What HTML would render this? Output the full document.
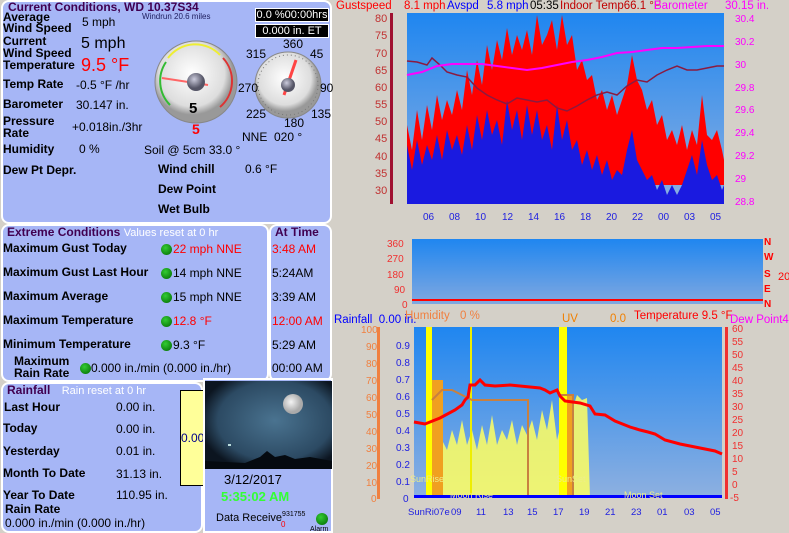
<!DOCTYPE html>
<html><head><meta charset="utf-8"><style>
*{margin:0;padding:0;box-sizing:border-box}
body{width:789px;height:531px;overflow:hidden;background:#d4d0c8;font-family:"Liberation Sans",sans-serif;position:relative}
.p{position:absolute;background:#a6b6f6;border:2px solid #fff;border-radius:8px}
.t{position:absolute;white-space:nowrap;font-size:12px;color:#000}
.b{font-weight:bold}
.s{font-size:10px}
.dot{position:absolute;width:11px;height:11px;border-radius:50%;background:radial-gradient(circle at 40% 35%,#3c3,#060);}
</style></head><body>

<!-- Current conditions -->
<div class="p" style="left:1px;top:0;width:331px;height:224px"></div>
<div class="t b" style="left:8px;top:0;color:#400050;font-size:12px">Current Conditions, WD 10.37S34</div>
<div class="t b" style="left:3px;top:12px;line-height:11px;font-size:12px">Average<br>Wind Speed</div>
<div class="t" style="left:82px;top:15px">5 mph</div>
<div class="t" style="left:142px;top:12px;font-size:8px;color:#202060">Windrun 20.6 miles</div>
<div class="t b" style="left:3px;top:35px;line-height:12px">Current<br>Wind Speed</div>
<div class="t" style="left:81px;top:35px;font-size:16px">5 mph</div>
<div class="t b" style="left:3px;top:58px">Temperature</div>
<div class="t" style="left:81px;top:55px;font-size:18px;color:#f00">9.5 °F</div>
<div class="t b" style="left:3px;top:77px">Temp Rate</div>
<div class="t" style="left:76px;top:78px">-0.5 °F /hr</div>
<div class="t b" style="left:3px;top:97px">Barometer</div>
<div class="t" style="left:76px;top:98px">30.147 in.</div>
<div class="t b" style="left:3px;top:115px;line-height:12px">Pressure<br>Rate</div>
<div class="t" style="left:72px;top:120px">+0.018in./3hr</div>
<div class="t b" style="left:3px;top:142px">Humidity</div>
<div class="t" style="left:79px;top:142px">0 %</div>
<div class="t b" style="left:3px;top:163px">Dew Pt Depr.</div>
<div class="t" style="left:144px;top:143px">Soil @ 5cm 33.0 °</div>
<div class="t b" style="left:158px;top:162px">Wind chill</div>
<div class="t" style="left:245px;top:162px">0.6 °F</div>
<div class="t b" style="left:158px;top:182px">Dew Point</div>
<div class="t b" style="left:158px;top:202px">Wet Bulb</div>
<div style="position:absolute;left:255px;top:8px;width:74px;height:14px;background:#000;border:1px solid #fff;color:#fff;font-size:11px;text-align:center;line-height:12px">0.0 %00:00hrs</div>
<div style="position:absolute;left:255px;top:24px;width:74px;height:14px;background:#000;border:1px solid #fff;color:#fff;font-size:11px;text-align:center;line-height:12px">0.000 in. ET</div>
<svg style="position:absolute;left:0;top:0" width="335" height="225">
 <defs><radialGradient id="g1" cx="45%" cy="40%"><stop offset="0" stop-color="#fff"/><stop offset=".8" stop-color="#ddd"/><stop offset="1" stop-color="#999"/></radialGradient>
 <radialGradient id="k" cx="40%" cy="35%"><stop offset="0" stop-color="#ccd"/><stop offset="1" stop-color="#556"/></radialGradient></defs>
 <circle cx="196" cy="82" r="41" fill="url(#g1)" stroke="#888"/>
 <path d="M170 105 A34 34 0 0 1 166 62" stroke="#3b3" stroke-width="2" fill="none"/>
 <path d="M168 58 A34 34 0 0 1 220 55" stroke="#ee3" stroke-width="2" fill="none"/>
 <path d="M223 58 A34 34 0 0 1 220 107" stroke="#d33" stroke-width="2" fill="none"/>
 <line x1="162" y1="78" x2="208" y2="85" stroke="#f66" stroke-width="2"/>
 <circle cx="196" cy="82" r="9" fill="url(#k)"/>
 <text x="189" y="113" font-size="15" font-weight="bold" font-family="Liberation Sans">5</text>
 <text x="192" y="134" font-size="14" fill="#f00" font-weight="bold" font-family="Liberation Sans">5</text>
 <circle cx="288" cy="85" r="33" fill="url(#g1)" stroke="#888"/>
 <circle cx="288" cy="85" r="30" fill="none" stroke="#777" stroke-dasharray="1 3"/>
 <line x1="284" y1="95" x2="296" y2="60" stroke="#f44" stroke-width="3"/>
 <circle cx="288" cy="85" r="7" fill="url(#k)"/>
 <g font-size="12" font-family="Liberation Sans"><text x="283" y="48">360</text><text x="246" y="58">315</text><text x="310" y="58">45</text><text x="238" y="92">270</text><text x="320" y="92">90</text><text x="246" y="118">225</text><text x="311" y="118">135</text><text x="284" y="127">180</text><text x="242" y="141">NNE &#160;020 °</text></g>
</svg>

<!-- Extreme -->
<div class="p" style="left:1px;top:224px;width:268px;height:158px"></div>
<div class="p" style="left:269px;top:224px;width:63px;height:158px"></div>
<div class="t b" style="left:7px;top:225px;color:#400050">Extreme Conditions <span style="color:#fff;font-weight:normal;font-size:11px">Values reset at 0 hr</span></div>
<div class="t b" style="left:275px;top:225px;color:#400050">At Time</div>
<div class="t b" style="left:3px;top:241px">Maximum Gust Today</div>
<div class="t b" style="left:3px;top:265px">Maximum Gust Last Hour</div>
<div class="t b" style="left:3px;top:289px">Maximum Average</div>
<div class="t b" style="left:3px;top:313px">Maximum Temperature</div>
<div class="t b" style="left:3px;top:337px">Minimum Temperature</div>
<div class="t b" style="left:14px;top:355px;line-height:12px;text-align:center">Maximum<br>Rain Rate</div>
<div class="dot" style="left:161px;top:244px"></div><div class="t" style="left:173px;top:242px;color:#f00">22 mph NNE</div>
<div class="dot" style="left:161px;top:268px"></div><div class="t" style="left:173px;top:266px">14 mph NNE</div>
<div class="dot" style="left:161px;top:292px"></div><div class="t" style="left:173px;top:290px">15 mph NNE</div>
<div class="dot" style="left:161px;top:316px"></div><div class="t" style="left:173px;top:314px;color:#f00">12.8 °F</div>
<div class="dot" style="left:161px;top:340px"></div><div class="t" style="left:173px;top:338px">9.3 °F</div>
<div class="dot" style="left:80px;top:363px"></div><div class="t" style="left:91px;top:361px">0.000 in./min (0.000 in./hr)</div>
<div class="t" style="left:272px;top:242px;color:#f00">3:48 AM</div>
<div class="t" style="left:272px;top:266px">5:24AM</div>
<div class="t" style="left:272px;top:290px">3:39 AM</div>
<div class="t" style="left:272px;top:314px;color:#f00">12:00 AM</div>
<div class="t" style="left:272px;top:338px">5:29 AM</div>
<div class="t" style="left:272px;top:361px">00:00 AM</div>

<!-- Rainfall -->
<div class="p" style="left:1px;top:382px;width:202px;height:151px"></div>
<div class="t b" style="left:7px;top:383px;color:#400050">Rainfall <span style="color:#fff;font-weight:normal;font-size:11px;margin-left:8px">Rain reset at 0 hr</span></div>
<div class="t b" style="left:4px;top:400px">Last Hour</div><div class="t" style="left:116px;top:400px">0.00 in.</div>
<div class="t b" style="left:3px;top:421px">Today</div><div class="t" style="left:116px;top:422px">0.00 in.</div>
<div class="t b" style="left:3px;top:444px">Yesterday</div><div class="t" style="left:116px;top:444px">0.01 in.</div>
<div class="t b" style="left:3px;top:466px">Month To Date</div><div class="t" style="left:116px;top:467px">31.13 in.</div>
<div class="t b" style="left:3px;top:488px">Year To Date</div><div class="t" style="left:116px;top:488px">110.95 in.</div>
<div class="t b" style="left:5px;top:502px">Rain Rate</div>
<div class="t" style="left:5px;top:516px">0.000 in./min (0.000 in./hr)</div>
<div style="position:absolute;left:180px;top:390px;width:24px;height:96px;background:#ffff99;border:1px solid #000"></div>
<div class="t" style="left:181px;top:431px;color:#00008b">0.00</div>
<div class="p" style="left:203px;top:378px;width:130px;height:155px;border-radius:0"></div>
<svg style="position:absolute;left:205px;top:381px" width="127" height="88">
 <defs><radialGradient id="sky" cx="55%" cy="45%" r="60%"><stop offset="0" stop-color="#4a7390"/><stop offset=".75" stop-color="#2c4a63"/><stop offset="1" stop-color="#0c1520"/></radialGradient>
 <radialGradient id="mn" cx="40%" cy="40%"><stop offset="0" stop-color="#f4f4f4"/><stop offset="1" stop-color="#aaa"/></radialGradient></defs>
 <rect width="127" height="88" fill="url(#sky)"/>
 <circle cx="88" cy="23" r="10" fill="url(#mn)"/>
 <path d="M0 88 L0 80 L40 82 L55 76 L62 70 L70 76 L80 74 L90 78 L105 76 L127 80 L127 88Z" fill="#050a10"/>
 <rect x="23" y="63" width="3" height="2" fill="#bdd"/>
</svg>
<div class="t" style="left:224px;top:472px;font-size:13px">3/12/2017</div>
<div class="t b" style="left:221px;top:489px;font-size:13px;color:#3f3">5:35:02 AM</div>
<div class="t" style="left:216px;top:511px;font-size:11px">Data Receive<span style="font-size:7px;vertical-align:5px">931755</span></div>
<div class="t" style="left:281px;top:520px;font-size:8px;color:#f00">0</div>
<div class="dot" style="left:316px;top:513px;width:12px;height:12px"></div>
<div class="t" style="left:310px;top:526px;font-size:7px">Alarm</div>

<!-- Right charts -->
<svg style="position:absolute;left:332px;top:0" width="457" height="531" font-family="Liberation Sans">
 <defs>
  <linearGradient id="bg" x1="0" y1="0" x2="0" y2="1"><stop offset="0" stop-color="#1f86f0"/><stop offset="1" stop-color="#8eb0e0"/></linearGradient>
  <linearGradient id="bg2" x1="0" y1="0" x2="0" y2="1"><stop offset="0" stop-color="#1f86f0"/><stop offset="1" stop-color="#80a8e0"/></linearGradient>
 </defs>
 <g font-size="11.5">
  <text x="4" y="9" fill="#f00">Gustspeed</text><text x="72" y="9" fill="#f00">8.1 mph</text>
  <text x="115" y="9" fill="#00f">Avspd</text><text x="155" y="9" fill="#00f">5.8 mph</text>
  <text x="198" y="9">05:35</text><text x="228" y="9" fill="#c00000">Indoor Temp66.1 °F</text>
  <text x="322" y="9" fill="#f0f">Barometer</text><text x="393" y="9" fill="#f0f">30.15 in.</text>
 </g>
 <!-- top chart: plot x75..392 y13..204 -->
 <rect x="75" y="13" width="317" height="191" fill="url(#bg)"/>
 <polygon fill="#f00" points="75,125 80,150 85,110 90,140 95,105 100,130 105,95 110,120 115,100 120,115 125,90 130,110 135,70 140,95 145,60 150,85 155,45 160,70 165,40 170,60 175,28 180,55 185,35 190,50 195,30 200,55 205,15 210,45 215,35 220,20 225,50 230,15 235,45 240,35 245,70 250,60 255,80 260,75 265,100 270,90 275,110 280,95 285,115 290,100 295,85 300,55 305,80 310,90 315,110 320,100 325,125 330,115 335,140 340,130 345,145 350,125 355,150 360,130 365,145 370,95 375,135 380,140 385,130 390,150 392,160 392,185 75,185"/>
 <polygon fill="#1a1ae0" points="75,145 80,170 85,140 90,165 95,145 100,160 105,135 110,160 115,130 120,150 125,135 130,155 135,125 140,150 145,115 150,140 155,110 160,135 165,120 170,145 175,100 180,130 185,110 190,140 195,105 200,135 205,110 210,140 215,125 220,150 225,105 230,140 235,120 240,150 245,140 250,165 255,150 260,170 265,155 270,175 275,160 280,180 285,170 290,175 295,150 300,130 305,160 310,170 315,180 320,175 325,190 330,180 335,195 340,185 345,195 350,185 355,170 360,155 365,175 370,140 375,165 380,180 385,175 390,190 392,185 392,204 75,204"/>
 <polyline fill="none" stroke="#8b1a40" stroke-width="1.5" points="75,61 85,62 95,65 100,58 108,65 115,72 125,75 135,77 145,88 155,95 165,100 175,104 185,98 195,100 205,102 215,100 225,108 235,111 245,106 255,100 265,95 275,92 285,95 295,86 305,80 315,82 325,75 335,70 345,66 355,70 365,70 375,68 385,66 392,66"/>
 <polyline fill="none" stroke="#f0f" stroke-width="2" points="75,75 90,72 105,66 120,64 135,64 150,64 165,66 180,68 195,70 210,68 225,65 240,62 255,60 270,57 285,53 300,52 315,50 330,48 345,48 360,47 375,46 392,46"/>
 <rect x="58" y="13" width="3" height="191" fill="#a01030"/>
 <g font-size="11" fill="#c03030">
  <text x="43" y="22">80</text><text x="43" y="39">75</text><text x="43" y="57">70</text><text x="43" y="74">65</text><text x="43" y="91">60</text><text x="43" y="108">55</text><text x="43" y="125">50</text><text x="43" y="142">45</text><text x="43" y="160">40</text><text x="43" y="177">35</text><text x="43" y="194">30</text>
 </g>
 <g font-size="10" fill="#f0f">
  <text x="403" y="22">30.4</text><text x="403" y="45">30.2</text><text x="403" y="68">30</text><text x="403" y="91">29.8</text><text x="403" y="113">29.6</text><text x="403" y="136">29.4</text><text x="403" y="159">29.2</text><text x="403" y="182">29</text><text x="403" y="205">28.8</text>
 </g>
 <g font-size="10" fill="#2020e0">
  <text x="91" y="220">06</text><text x="117" y="220">08</text><text x="143" y="220">10</text><text x="170" y="220">12</text><text x="196" y="220">14</text><text x="222" y="220">16</text><text x="248" y="220">18</text><text x="274" y="220">20</text><text x="300" y="220">22</text><text x="326" y="220">00</text><text x="352" y="220">03</text><text x="378" y="220">05</text>
 </g>
 <!-- wind dir -->
 <rect x="80" y="239" width="351" height="65" fill="url(#bg2)"/>
 <rect x="80" y="299" width="351" height="2" fill="#f00"/>
 <g font-size="10" fill="#f03030"><text x="55" y="247">360</text><text x="55" y="262">270</text><text x="55" y="278">180</text><text x="62" y="293">90</text><text x="70" y="308">0</text></g>
 <g font-size="10" fill="#f00" font-weight="bold"><text x="432" y="245">N</text><text x="432" y="260">W</text><text x="432" y="277">S</text><text x="432" y="292">E</text><text x="432" y="307">N</text></g>
 <text x="446" y="280" font-size="11" fill="#f00">20</text>
 <!-- bottom chart -->
 <g font-size="11.5"><text x="2" y="323" fill="#00f">Rainfall &#160;0.00 in.</text><text x="73" y="319" fill="#f08040">Humidity</text><text x="128" y="319" fill="#f08040">0 %</text><text x="230" y="322" fill="#f08000">UV</text><text x="278" y="322" fill="#f08000">0.0</text><text x="302" y="319" fill="#f00">Temperature 9.5 °F</text><text x="398" y="323" fill="#f0f">Dew Point44</text></g>
 <rect x="82" y="327" width="308" height="171" fill="url(#bg)"/>
 <polygon fill="#ffff60" opacity=".85" points="108,498 110,440 115,450 120,430 125,445 130,420 135,445 140,430 145,450 150,425 155,445 160,415 165,445 170,430 175,440 180,420 185,445 190,425 195,435 200,420 205,440 210,410 215,430 220,400 225,440 230,420 235,440 240,410 245,395 250,400 255,398 258,498"/>
 <rect x="96" y="380" width="15" height="118" fill="#f0a020"/>
 <rect x="94" y="327" width="6" height="171" fill="#ff0"/>
 <rect x="227" y="395" width="14" height="103" fill="#f0a020"/>
 <rect x="227" y="327" width="8" height="171" fill="#ff0"/>
 <rect x="138" y="327" width="2" height="171" fill="#ee0"/>
 <polyline fill="none" stroke="#c88040" stroke-width="2" points="100,400 110,390 120,390 130,395 140,400 196,400 196,498"/>
 <polyline fill="none" stroke="#c88040" stroke-width="2" points="228,395 241,395 241,498"/>
 <polyline fill="none" stroke="#f00" stroke-width="3" points="82,422 93,424 108,418 123,410 130,405 133,400 136,397 138,385 143,385 148,380 153,385 163,386 178,385 188,386 198,387 208,388 213,390 218,393 225,390 228,396 233,401 248,403 258,406 263,414 273,415 283,421 298,427 308,430 316,432 323,434 328,437 333,440 348,444 368,448 383,451 390,454"/>
 <rect x="82" y="495" width="308" height="3" fill="#00f"/>
 <rect x="45" y="327" width="3" height="172" fill="#f08040"/>
 <rect x="393" y="327" width="3" height="172" fill="#f03030"/>
 <g font-size="10" fill="#f08040"><text x="29" y="333">100</text><text x="34" y="350">90</text><text x="34" y="367">80</text><text x="34" y="384">70</text><text x="34" y="401">60</text><text x="34" y="418">50</text><text x="34" y="435">40</text><text x="34" y="452">30</text><text x="34" y="469">20</text><text x="34" y="486">10</text><text x="39" y="502">0</text></g>
 <g font-size="10" fill="#2020e0"><text x="64" y="349">0.9</text><text x="64" y="366">0.8</text><text x="64" y="383">0.7</text><text x="64" y="400">0.6</text><text x="64" y="417">0.5</text><text x="64" y="434">0.4</text><text x="64" y="451">0.3</text><text x="64" y="468">0.2</text><text x="64" y="485">0.1</text><text x="71" y="502">0</text></g>
 <g font-size="10" fill="#f03030"><text x="400" y="332">60</text><text x="400" y="345">55</text><text x="400" y="358">50</text><text x="400" y="371">45</text><text x="400" y="384">40</text><text x="400" y="397">35</text><text x="400" y="410">30</text><text x="400" y="423">25</text><text x="400" y="436">20</text><text x="400" y="449">15</text><text x="400" y="462">10</text><text x="400" y="475">5</text><text x="400" y="488">0</text><text x="398" y="501">-5</text></g>
 <g font-size="9" fill="#ee8"><text x="78" y="482">SunRise</text><text x="224" y="482">SunSet</text><text x="118" y="498">Moon Rise</text><text x="292" y="498">Moon Set</text></g>
 <g font-size="9.5" fill="#2020e0"><text x="76" y="515">SunRi07e</text><text x="119" y="515">09</text><text x="144" y="515">11</text><text x="171" y="515">13</text><text x="195" y="515">15</text><text x="221" y="515">17</text><text x="247" y="515">19</text><text x="273" y="515">21</text><text x="299" y="515">23</text><text x="325" y="515">01</text><text x="352" y="515">03</text><text x="378" y="515">05</text></g>
</svg>
</body></html>
